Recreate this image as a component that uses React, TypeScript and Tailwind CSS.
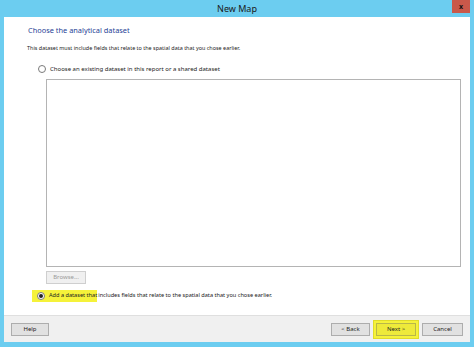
const font = "font-['Segoe_UI','Noto_Sans','DejaVu_Sans',sans-serif]";

function Radio({ checked }: { checked?: boolean }) {
    return (
        <span className="w-[8px] h-[8px] rounded-full border border-[#7a7a7a] bg-white flex items-center justify-center shrink-0">
            {checked && <span className="w-[4px] h-[4px] rounded-full bg-[#222]" />}
        </span>
    );
}

function Btn({ children, className = '' }: { children: React.ReactNode; className?: string }) {
    return (
        <div className={`h-[13px] border border-[#adadad] bg-[#e1e1e1] flex items-center justify-center text-[6px] text-[#222] ${className}`}>
            {children}
        </div>
    );
}

export default function App() {
    return (
        <div className={`w-[474px] h-[347px] bg-[#6ccdf0] flex flex-col overflow-hidden ${font}`}>
            {/* title bar */}
            <div className="relative h-[17px] shrink-0 flex items-center justify-center">
                <span className="text-[9px] text-[#1a1a1a] leading-none">New Map</span>
                <div className="absolute top-0 right-[4px] w-[18px] h-[13px] bg-[#c9584a] flex items-center justify-center">
                    <span className="text-[7px] font-bold text-[#111] leading-none">x</span>
                </div>
            </div>

            <div className="flex-1 mx-[4px] flex flex-col">
                {/* body */}
                <div className="flex-1 bg-white flex flex-col pl-[24px] pr-[9px]">
                    <div className="mt-[8px] text-[7.4px] text-[#1f3f96] leading-[10px]">Choose the analytical dataset</div>
                    <div className="mt-[9px] text-[5.45px] text-[#222] leading-[8px] -ml-[1px]">
                        This dataset must include fields that relate to the spatial data that you chose earlier.
                    </div>
                    <div className="mt-[13px] flex items-center gap-[4px] ml-[10px] h-[8px]">
                        <Radio />
                        <span className="text-[6px] text-[#222] leading-none">Choose an existing dataset in this report or a shared dataset</span>
                    </div>
                    <div className="ml-[18px] mt-[6px] h-[188px] border border-[#b4b4b4] bg-white" />
                    <Btn className="ml-[18px] mt-[4px] w-[40px] h-[12px] bg-[#f0f0f0] border-[#cfcfcf] !text-[#9a9a9a]">Browse...</Btn>
                    <div className="mt-[6px] flex items-center h-[12px] ml-[4px]">
                        <div className="flex items-center gap-[4px] bg-[#f5f23a] h-[12px] pl-[5px]">
                            <Radio checked />
                            <span className="text-[5.6px] text-[#222] leading-none">Add a dataset that</span>
                        </div>
                        <span className="text-[5.6px] text-[#222] leading-none ml-[1px]">includes fields that relate to the spatial data that you chose earlier.</span>
                    </div>
                </div>

                {/* footer */}
                <div className="h-[27px] shrink-0 bg-[#f0f0f0] border-t border-[#dfdfdf] flex items-center px-[7px]">
                    <Btn className="w-[38px]">Help</Btn>
                    <div className="ml-auto flex items-center">
                        <Btn className="w-[39px]">&lt; Back</Btn>
                        <div className="ml-[3px] p-[2px] bg-[#f5f23a] border border-[#e0dc2a]">
                            <Btn className="w-[40px] h-[12px] bg-[#eeea3a] border-[#b9b74a]">Next &gt;</Btn>
                        </div>
                        <Btn className="ml-[3px] w-[41px]">Cancel</Btn>
                    </div>
                </div>
            </div>
            <div className="h-[5px] shrink-0" />
        </div>
    );
}
